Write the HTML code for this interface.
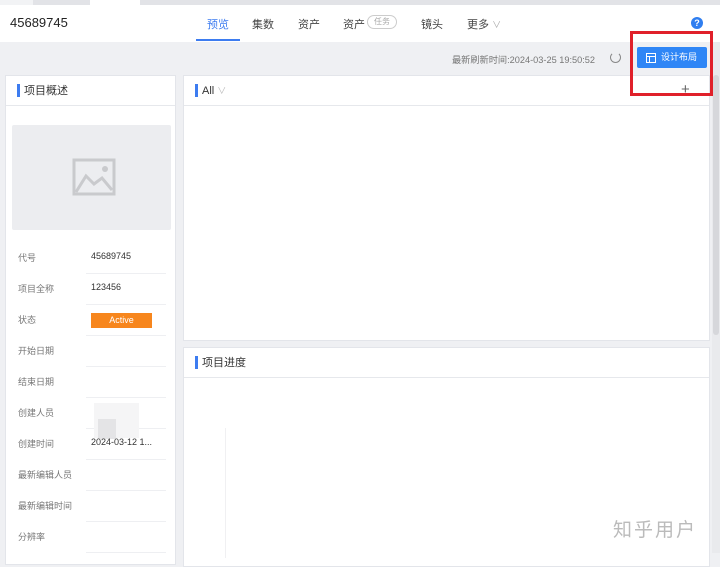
<!DOCTYPE html>
<html><head><meta charset="utf-8"><style>
*{margin:0;padding:0;box-sizing:border-box}
body{width:720px;height:553px;overflow:hidden;background:#eff0f3;font-family:"Liberation Sans","Noto Sans CJK SC",sans-serif;position:relative;color:#333}
.abs{position:absolute}
.panel{position:absolute;background:#fff;border:1px solid #e3e5ea}
.hd{height:30px;border-bottom:1px solid #e6e8ec;font-size:11px;line-height:30px;padding-left:18px;position:relative}
.hd:before{content:"";position:absolute;left:11px;top:8px;width:3px;height:13px;background:#3d7cf0}
.row{position:absolute;left:0;width:160px;height:31px;font-size:9px;color:#777}
.row .l{position:absolute;left:12px;top:8px}
.row .v{position:absolute;left:85px;top:8px;color:#333}
.row .line{position:absolute;left:80px;right:0;bottom:0;height:1px;background:#eeeff2}
</style></head><body>
<div class="abs" style="left:0;top:0;width:720px;height:5px;background:#e2e3e7"></div>
<div class="abs" style="left:0;top:0;width:33px;height:5px;background:#f2f3f5"></div>
<div class="abs" style="left:90px;top:0;width:50px;height:5px;background:#fff"></div>
<div class="abs" style="left:0;top:5px;width:720px;height:37px;background:#fff"></div>
<div class="abs" style="left:10px;top:15px;font-size:13px;color:#222">45689745</div>
<div class="abs" style="left:207px;top:16px;font-size:11px;color:#3d7cf0">预览</div>
<div class="abs" style="left:196px;top:39px;width:44px;height:2px;background:#3d7cf0"></div>
<div class="abs" style="left:252px;top:16px;font-size:11px;color:#444">集数</div>
<div class="abs" style="left:298px;top:16px;font-size:11px;color:#444">资产</div>
<div class="abs" style="left:343px;top:16px;font-size:11px;color:#444">资产</div>
<div class="abs" style="left:367px;top:15px;width:30px;height:14px;border:1px solid #ccc;border-radius:7px;font-size:8px;color:#aaa;text-align:center;line-height:12px">任务</div>
<div class="abs" style="left:421px;top:16px;font-size:11px;color:#444">镜头</div>
<div class="abs" style="left:467px;top:16px;font-size:11px;color:#444">更多 <span style="color:#aaa;font-size:9px">∨</span></div>
<div class="abs" style="left:691px;top:17px;width:12px;height:12px;border-radius:6px;background:#2f7ef0;color:#fff;font-size:9px;text-align:center;line-height:12px;font-weight:bold">?</div>
<div class="abs" style="left:452px;top:52px;font-size:9.2px;color:#777">最新刷新时间:2024-03-25 19:50:52</div>
<div class="abs" style="left:610px;top:52px;width:11px;height:11px;border:1.3px solid #888;border-radius:50%;border-top-color:transparent"></div>
<div class="abs" style="left:637px;top:47px;width:70px;height:21px;background:#2f86f6;border-radius:2px;color:#fff;font-size:9px;line-height:21px;padding-left:24px">设计布局</div>
<div class="abs" style="left:646px;top:53px;width:10px;height:10px;border:1.2px solid #fff"></div>
<div class="abs" style="left:646px;top:56px;width:10px;height:1.2px;background:#fff"></div>
<div class="abs" style="left:649px;top:56px;width:1.2px;height:7px;background:#fff"></div>
<div class="abs" style="left:630px;top:31px;width:83px;height:65px;border:3px solid #e0202a;z-index:5"></div>
<div class="abs" style="left:712px;top:42px;width:8px;height:511px;background:#e9eaed"></div>
<div class="abs" style="left:713px;top:75px;width:6px;height:260px;background:#d6d7db;border-radius:3px"></div>

<div class="panel" style="left:5px;top:75px;width:171px;height:490px">
<div class="hd">项目概述</div>
<div class="abs" style="left:6px;top:49px;width:159px;height:105px;background:#ecedf0;border-radius:2px"></div>
<svg class="abs" style="left:66px;top:82px" width="44" height="38" viewBox="0 0 44 38"><rect x="2" y="2" width="40" height="34" fill="none" stroke="#c9cacd" stroke-width="3"/><path d="M4 34 L14 18 L22 26 L30 20 L40 32" fill="none" stroke="#c9cacd" stroke-width="3"/><circle cx="33" cy="11" r="3" fill="#c9cacd"/></svg>
<div class="row" style="top:167px"><span class="l">代号</span><span class="v">45689745</span><div class="line"></div></div>
<div class="row" style="top:198px"><span class="l">项目全称</span><span class="v">123456</span><div class="line"></div></div>
<div class="row" style="top:229px"><span class="l">状态</span><div class="line"></div></div>
<div class="abs" style="left:85px;top:237px;width:61px;height:15px;background:#f7861d;color:#fff;font-size:9px;text-align:center;line-height:15px">Active</div>
<div class="row" style="top:260px"><span class="l">开始日期</span><div class="line"></div></div>
<div class="row" style="top:291px"><span class="l">结束日期</span><div class="line"></div></div>
<div class="row" style="top:322px"><span class="l">创建人员</span><div class="line"></div></div>
<div class="abs" style="left:88px;top:327px;width:45px;height:35px;background:#f5f5f6"></div>
<div class="abs" style="left:92px;top:343px;width:18px;height:20px;background:#e4e4e6"></div>
<div class="row" style="top:353px"><span class="l">创建时间</span><span class="v">2024-03-12 1...</span><div class="line"></div></div>
<div class="row" style="top:384px"><span class="l">最新编辑人员</span><div class="line"></div></div>
<div class="row" style="top:415px"><span class="l">最新编辑时间</span><div class="line"></div></div>
<div class="row" style="top:446px"><span class="l">分辨率</span><div class="line"></div></div>
</div>

<div class="panel" style="left:183px;top:75px;width:527px;height:266px">
<div class="hd">All <span style="color:#bbb;font-size:9px">∨</span></div>
<div class="abs" style="left:497px;top:5px;font-size:15px;color:#666">+</div>
</div>
<div class="panel" style="left:183px;top:347px;width:527px;height:220px">
<div class="hd">项目进度</div>
<div class="abs" style="left:41px;top:80px;width:1px;height:130px;background:#f0f0f2"></div>
</div>
<div class="abs" style="left:613px;top:515px;font-size:19px;color:#bbb;letter-spacing:2px">知乎用户</div>
</body></html>
